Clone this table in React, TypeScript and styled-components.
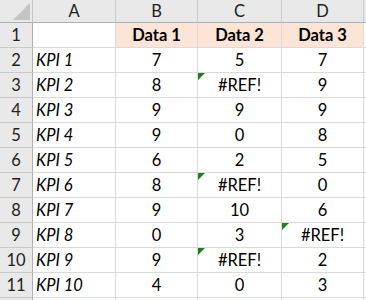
import { Fragment } from "react";
import styled, { createGlobalStyle, css } from "styled-components";

const GlobalStyle = createGlobalStyle`
  html, body {
    margin: 0;
    padding: 0;
    background: #ffffff;
    overflow: hidden;
  }
  body {
    font-family: "Lato", "Open Sans", sans-serif;
  }
`;

type Row = {
  label: string;
  values: (number | string)[];
};

const rows: Row[] = [
  { label: "KPI 1", values: [7, 5, 7] },
  { label: "KPI 2", values: [8, "#REF!", 9] },
  { label: "KPI 3", values: [9, 9, 9] },
  { label: "KPI 4", values: [9, 0, 8] },
  { label: "KPI 5", values: [6, 2, 5] },
  { label: "KPI 6", values: [8, "#REF!", 0] },
  { label: "KPI 7", values: [9, 10, 6] },
  { label: "KPI 8", values: [0, 3, "#REF!"] },
  { label: "KPI 9", values: [9, "#REF!", 2] },
  { label: "KPI 10", values: [4, 0, 3] },
];

const columns = ["A", "B", "C", "D"];
const titles = ["Data 1", "Data 2", "Data 3"];

const Sheet = styled.div`
  display: grid;
  grid-template-columns: 33px 83px 82px 84px 82px 2px;
  grid-template-rows: 23px repeat(12, 25px);
  height: 300px;
  overflow: hidden;
  font-size: 16.5px;
  color: #000;
`;

const Corner = styled.div`
  position: relative;
  background: #e9e9e9;
  border-right: 1px solid #c3c3c3;
  border-bottom: 1px solid #b0b0b0;

  &::after {
    content: "";
    position: absolute;
    right: 2px;
    bottom: 2px;
    width: 0;
    height: 0;
    border-left: 17px solid transparent;
    border-bottom: 17px solid #c4c4c4;
  }
`;

const ColHead = styled.div`
  display: flex;
  align-items: center;
  justify-content: center;
  background: #e9e9e9;
  border-right: 1px solid #c9c9c9;
  border-bottom: 1px solid #b0b0b0;
  color: #222;
`;

const RowHead = styled.div`
  display: flex;
  align-items: center;
  justify-content: center;
  background: #e9e9e9;
  border-right: 1px solid #b0b0b0;
  border-bottom: 1px solid #c9c9c9;
  color: #222;
`;

const Cell = styled.div<{ $align?: "left" | "center"; $title?: boolean; $italic?: boolean; $flag?: boolean }>`
  position: relative;
  display: flex;
  align-items: center;
  justify-content: ${(p) => (p.$align === "left" ? "flex-start" : "center")};
  padding: 0 3px;
  border-right: 1px solid #dadada;
  border-bottom: 1px solid #dadada;
  background: ${(p) => (p.$title ? "#fce4d6" : "#ffffff")};
  font-weight: ${(p) => (p.$title ? 700 : 400)};
  font-style: ${(p) => (p.$italic ? "italic" : "normal")};
  white-space: nowrap;

  ${(p) =>
    p.$flag &&
    css`
      &::before {
        content: "";
        position: absolute;
        left: 0;
        top: 0;
        width: 0;
        height: 0;
        border-top: 7px solid #1b7f1b;
        border-right: 7px solid transparent;
      }
    `}
`;

const Edge = styled.div<{ $head?: boolean }>`
  background: ${(p) => (p.$head ? "#e9e9e9" : "#ffffff")};
  border-bottom: 1px solid ${(p) => (p.$head ? "#b0b0b0" : "#dadada")};
`;

export default function App() {
  return (
    <>
      <GlobalStyle />
      <Sheet>
        <Corner />
        {columns.map((c) => (
          <ColHead key={c}>{c}</ColHead>
        ))}
        <Edge $head />

        <RowHead>1</RowHead>
        <Cell />
        {titles.map((t) => (
          <Cell key={t} $title>
            {t}
          </Cell>
        ))}
        <Edge />

        {rows.map((row, i) => (
          <Fragment key={row.label}>
            <RowHead>{i + 2}</RowHead>
            <Cell $align="left" $italic>
              {row.label}
            </Cell>
            {row.values.map((v, j) => (
              <Cell key={j} $flag={v === "#REF!"}>
                {v}
              </Cell>
            ))}
            <Edge />
          </Fragment>
        ))}

        <RowHead />
        <Cell />
        <Cell />
        <Cell />
        <Cell />
        <Edge />
      </Sheet>
    </>
  );
}
